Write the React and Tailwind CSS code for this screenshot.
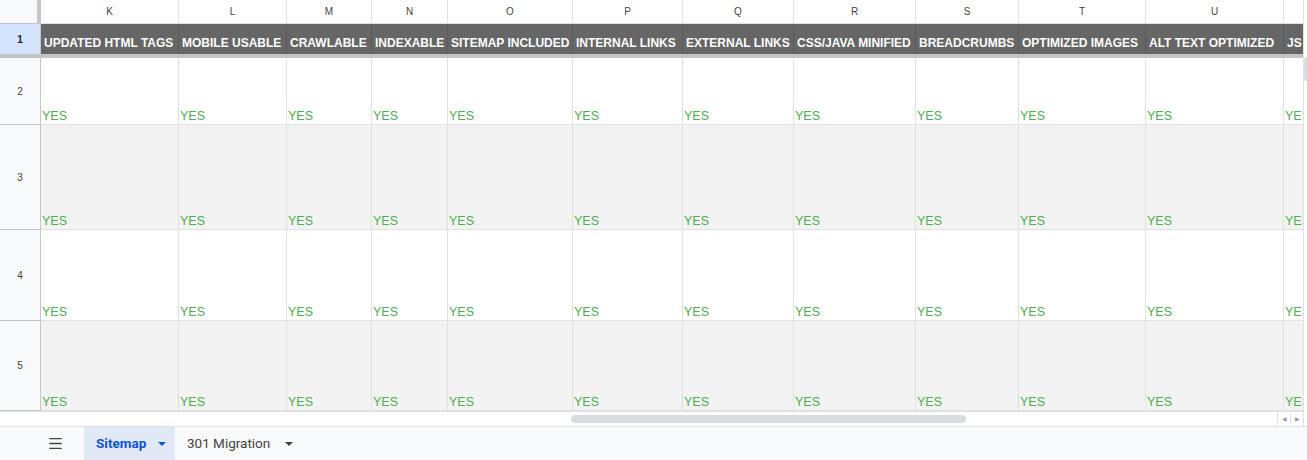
import { Menu } from "lucide-react";

const cols = [
  { letter: "K", title: "UPDATED HTML TAGS", w: 138 },
  { letter: "L", title: "MOBILE USABLE", w: 108 },
  { letter: "M", title: "CRAWLABLE", w: 85 },
  { letter: "N", title: "INDEXABLE", w: 76 },
  { letter: "O", title: "SITEMAP INCLUDED", w: 125 },
  { letter: "P", title: "INTERNAL LINKS", w: 110 },
  { letter: "Q", title: "EXTERNAL LINKS", w: 111 },
  { letter: "R", title: "CSS/JAVA MINIFIED", w: 122 },
  { letter: "S", title: "BREADCRUMBS", w: 103 },
  { letter: "T", title: "OPTIMIZED IMAGES", w: 127 },
  { letter: "U", title: "ALT TEXT OPTIMIZED", w: 138 },
  { letter: "V", title: "JS RENDERED", w: 110 },
];

const rows = [
  { n: 2, h: 67, bg: "bg-white" },
  { n: 3, h: 105, bg: "bg-[#f3f3f3]" },
  { n: 4, h: 91, bg: "bg-white" },
  { n: 5, h: 90, bg: "bg-[#f3f3f3]" },
];

const App = () => {
  return (
    <div className="w-[1307px] h-[460px] overflow-hidden bg-white flex flex-col font-['Liberation_Sans',Arial,sans-serif]">
      <div className="flex flex-1 min-h-0">
        {/* grid area */}
        <div className="flex-1 min-w-0 overflow-hidden flex flex-col">
          {/* column letters */}
          <div className="flex h-[24px] shrink-0">
            <div className="w-[41px] shrink-0 bg-[#f8f9fa] border-r-[4px] border-b border-[#c4c7c5] border-r-[#c4c7c5]" />
            {cols.map((c) => (
              <div
                key={c.letter}
                style={{ width: c.w }}
                className="shrink-0 bg-white border-r border-b border-[#e1e1e1] flex items-center justify-center text-[10px] text-[#444]"
              >
                {c.letter}
              </div>
            ))}
          </div>

          {/* row 1 headers */}
          <div className="flex h-[30px] shrink-0">
            <div className="w-[41px] shrink-0 bg-[#d3e3fd] border-r border-[#c4c7c5] flex items-center justify-center text-[10px] text-[#1f1f1f] font-bold">
              1
            </div>
            {cols.map((c) => (
              <div
                key={c.letter}
                style={{ width: c.w }}
                className="shrink-0 bg-[#666666] border-r border-[#5a5a5a] flex items-end pb-[2px] pl-[3px] text-[12px] font-bold text-white whitespace-nowrap overflow-hidden"
              >
                {c.title}
              </div>
            ))}
          </div>
          <div className="h-[4px] shrink-0 bg-[#c4c4c4]" />

          {rows.map((r) => (
            <div key={r.n} className="flex shrink-0" style={{ height: r.h }}>
              <div className="w-[41px] shrink-0 bg-[#f8f9fa] border-r border-b border-[#c4c7c5] flex items-center justify-center text-[10px] text-[#444]">
                {r.n}
              </div>
              {cols.map((c) => (
                <div
                  key={c.letter}
                  style={{ width: c.w }}
                  className={`shrink-0 ${r.bg} border-r border-b border-[#e1e1e1] flex items-end pb-0 pl-[1px] text-[12.5px] leading-[16px] text-[#4caf50] whitespace-nowrap overflow-hidden`}
                >
                  YES
                </div>
              ))}
            </div>
          ))}

          {/* horizontal scrollbar */}
          <div className="flex-1 min-h-0 flex items-center border-t border-[#e1e1e1] bg-white">
            <div className="w-[571px] shrink-0" />
            <div className="w-[395px] h-[8px] rounded-full bg-[#dadce0]" />
            <div className="flex-1" />
            <div className="flex h-full items-center border-l border-[#e1e1e1]">
              <span className="w-[12px] text-center text-[6px] text-[#999]">◀</span>
              <span className="h-[10px] border-l border-[#e1e1e1]" />
              <span className="w-[12px] text-center text-[6px] text-[#999]">▶</span>
            </div>
          </div>
        </div>

        {/* vertical scrollbar */}
        <div className="w-[4px] shrink-0 bg-white border-l border-[#e1e1e1] flex flex-col">
          <div className="h-[57px]" />
          <div className="h-[24px] bg-[#dadce0] rounded-l-sm" />
        </div>
      </div>

      {/* bottom sheet tabs */}
      <div className="h-[34px] shrink-0 bg-[#f9fafb] border-t border-[#e1e1e1] flex items-center">
        <div className="w-[84px] flex justify-start pl-[47px]">
          <Menu size={17} strokeWidth={1.8} className="text-[#444]" />
        </div>
        <div className="w-[91px] h-full flex items-center gap-[12px] bg-[#e1e9f7] pl-[12px] text-[13.5px] font-bold text-[#0b57d0] font-['Roboto',sans-serif]">
          Sitemap
          <span className="w-0 h-0 border-l-[4px] border-r-[4px] border-t-[4px] border-l-transparent border-r-transparent border-t-[#0b57d0]" />
        </div>
        <div className="h-full flex items-center gap-[15px] pl-[12px] text-[13.5px] text-[#444] font-['Roboto',sans-serif]">
          301 Migration
          <span className="w-0 h-0 border-l-[4px] border-r-[4px] border-t-[4px] border-l-transparent border-r-transparent border-t-[#444]" />
        </div>
      </div>
    </div>
  );
};

export default App;
